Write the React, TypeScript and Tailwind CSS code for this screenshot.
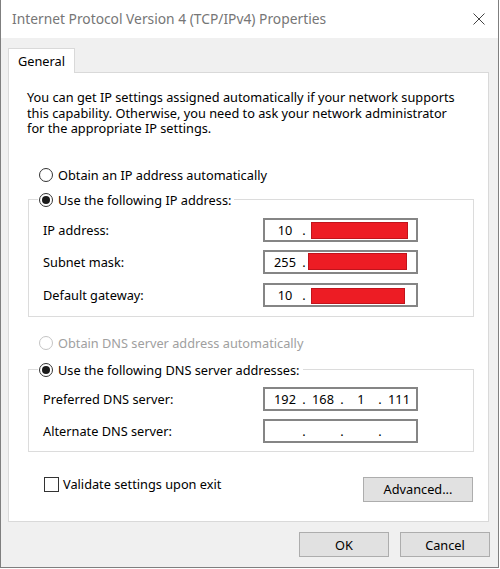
import { Fragment } from 'react';

const font = "font-['Noto_Sans',sans-serif]";

const Radio = ({
  checked,
  disabled,
  label,
}: {
  checked?: boolean;
  disabled?: boolean;
  label: string;
}) => (
  <div className="flex h-[16px] items-center gap-[5px]">
    <span
      className={`flex size-[14px] items-center justify-center rounded-full border bg-white ${
        disabled ? 'border-[#c4c4c4]' : 'border-[#333333]'
      }`}
    >
      {checked && <span className="size-[8px] rounded-full bg-[#1a1a1a]" />}
    </span>
    <span className={disabled ? 'text-[#a0a0a0]' : 'text-black'}>{label}</span>
  </div>
);

const IpBox = ({ octets, redact }: { octets: string[]; redact?: string }) => (
  <div className="relative flex h-[24px] w-[155px] items-center border-2 border-[#858585] bg-white pl-[4px]">
    {octets.map((o, i) => (
      <Fragment key={i}>
        <span className="w-[32px] text-center">{o}</span>
        {i < 3 && <span className="w-[6px] text-center">.</span>}
      </Fragment>
    ))}
    {redact && <div className={`absolute border border-[#c0141c] bg-[#ed1c24] ${redact}`} />}
  </div>
);

const Row = ({ label, children }: { label: string; children: React.ReactNode }) => (
  <div className="flex items-center justify-between">
    <span>{label}</span>
    {children}
  </div>
);

const Button = ({ label, className = '' }: { label: string; className?: string }) => (
  <button className={`flex h-[25px] items-center justify-center border border-[#adadad] bg-[#e1e1e1] text-black ${className}`}>
    {label}
  </button>
);

export default function App() {
  return (
    <div className={`h-[569px] w-[500px] bg-white text-[12.75px] leading-[16px] text-black ${font}`}>
      <div className="flex h-[568px] w-[499px] flex-col border-x border-b border-[#7f7f7f] bg-[#f0f0f0]">
        {/* Title bar */}
        <div className="flex h-[38px] shrink-0 items-center justify-between bg-white pl-[11px] pr-[13px]">
          <span className="text-[13.8px] text-[#767676]">
            Internet Protocol Version 4 (TCP/IPv4) Properties
          </span>
          <svg width="12" height="12" viewBox="0 0 12 12" className="text-[#444]">
            <path d="M0.5 0.5 L11.5 11.5 M11.5 0.5 L0.5 11.5" stroke="currentColor" strokeWidth="1" />
          </svg>
        </div>

        <div className="flex flex-col pl-[7px] pt-[10px]">
          {/* Tab */}
          <div className="relative z-10 -mb-px flex h-[25px] w-[67px] items-center border-x border-t border-[#d9d9d9] bg-white pl-[9px]">
            General
          </div>

          {/* Tab panel */}
          <div className="flex h-[450px] w-[481px] flex-col border border-[#d9d9d9] bg-white">
            <div className="flex flex-col pl-[18px] pt-[17px] leading-[15.5px]">
              <span>You can get IP settings assigned automatically if your network supports</span>
              <span>this capability. Otherwise, you need to ask your network administrator</span>
              <span>for the appropriate IP settings.</span>
            </div>

            <div className="mt-[30px] pl-[30px]">
              <Radio label="Obtain an IP address automatically" />
            </div>

            <fieldset className="ml-[19px] mt-[9px] w-[446px] border border-[#dcdcdc] pb-[9px] pl-[14px] pr-[55px] pt-[10px]">
              <legend className="-ml-[5px] bg-white pl-[1px] pr-[3px]">
                <Radio checked label="Use the following IP address:" />
              </legend>
              <div className="flex flex-col gap-[8.5px]">
                <Row label="IP address:">
                  <IpBox octets={['10', '', '', '']} redact="left-[46px] top-[2px] h-[17px] w-[97px]" />
                </Row>
                <Row label="Subnet mask:">
                  <IpBox octets={['255', '', '', '']} redact="left-[43px] top-[1px] h-[17px] w-[99px]" />
                </Row>
                <Row label="Default gateway:">
                  <IpBox octets={['10', '', '', '']} redact="left-[46px] top-[3px] h-[16px] w-[94px]" />
                </Row>
              </div>
            </fieldset>

            <div className="mt-[18px] pl-[30px]">
              <Radio disabled label="Obtain DNS server address automatically" />
            </div>

            <fieldset className="ml-[19px] mt-[11px] w-[446px] border border-[#dcdcdc] pb-[8px] pl-[14px] pr-[55px] pt-[9px]">
              <legend className="-ml-[5px] bg-white pl-[1px] pr-[3px]">
                <Radio checked label="Use the following DNS server addresses:" />
              </legend>
              <div className="flex flex-col gap-[8px]">
                <Row label="Preferred DNS server:">
                  <IpBox octets={['192', '168', '1', '111']} />
                </Row>
                <Row label="Alternate DNS server:">
                  <IpBox octets={['', '', '', '']} />
                </Row>
              </div>
            </fieldset>

            <div className="mt-[25px] flex items-start justify-between pl-[35px] pr-[15px]">
              <div className="flex h-[15px] items-center gap-[4px]">
                <span className="size-[15px] border border-[#333333] bg-white" />
                <span>Validate settings upon exit</span>
              </div>
              <Button label="Advanced..." className="w-[110px]" />
            </div>
          </div>

          {/* Dialog buttons */}
          <div className="mt-[10px] flex justify-end gap-[11px] pr-[8px]">
            <Button label="OK" className="w-[90px]" />
            <Button label="Cancel" className="w-[90px]" />
          </div>
        </div>
      </div>
    </div>
  );
}
